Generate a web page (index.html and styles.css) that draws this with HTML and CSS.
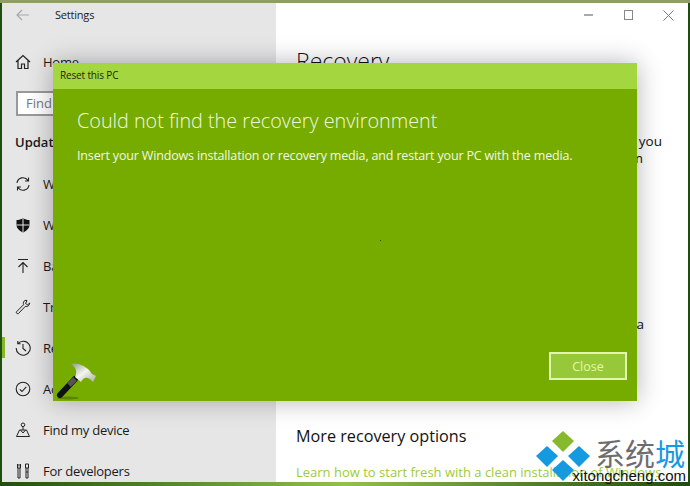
FILE: index.html
```html
<!DOCTYPE html>
<html lang="en">
<head>
  <meta charset="UTF-8">
  <meta name="viewport" content="width=device-width, initial-scale=1.0">
  <title>Settings</title>
  <link rel="stylesheet" href="styles.css">
</head>
<body>
  <div class="window">
    <aside class="sidebar">
      <div class="app-title">
        <svg class="back" width="14" height="12" viewBox="0 0 14 12"><path d="M6 1 1 6l5 5M1 6h12" fill="none" stroke="#a8a8a8" stroke-width="1.2"/></svg>
        <span>Settings</span>
      </div>
      <div class="nav-item home">
        <svg width="16" height="16" viewBox="0 0 16 16"><path d="M1 8 8 1.500 15 8M3 6.500V14.500H6.500V10H9.500V14.500H13V6.500" fill="none" stroke="#222" stroke-width="1.200"/></svg>
        <span>Home</span>
      </div>
      <div class="search">Find a setting</div>
      <h3 class="section">Update &amp; Security</h3>

      <div class="nav-item">
        <svg width="16" height="16" viewBox="0 0 16 16"><path d="M2 7A6 6 0 0 1 13 4.500M14 9A6 6 0 0 1 3 11.500M13.500 1.500V5H10M2.500 14.500V11H6" fill="none" stroke="#222" stroke-width="1.100"/></svg>
        <span>Windows Update</span>
      </div>
      <div class="nav-item">
        <svg width="16" height="16" viewBox="0 0 16 16"><path d="M8 1C6 2.500 4 3 1.500 3V8C1.500 11.500 5 14 8 15.500 11 14 14.500 11.500 14.500 8V3C12 3 10 2.500 8 1Z" fill="#111"/><path d="M8 1V15.500M1.500 8H14.500" stroke="#e6e6e6" stroke-width="1"/></svg>
        <span>Windows Security</span>
      </div>
      <div class="nav-item">
        <svg width="16" height="16" viewBox="0 0 16 16"><path d="M3 1.500H13M8 15V4.500M3.500 9 8 4.500 12.500 9" fill="none" stroke="#222" stroke-width="1.100"/></svg>
        <span>Backup</span>
      </div>
      <div class="nav-item">
        <svg width="16" height="16" viewBox="0 0 16 16"><path d="M10 1.500C8.500 2 8 4 8.600 5.700L1.500 12.800C1 13.500 1.500 15 3.300 14.700L10.300 7.400C12.500 8 14.500 6.500 14.700 4L12.700 5.800 10.500 4.500 12 1.500C11.300 1.300 10.600 1.300 10 1.500Z" fill="none" stroke="#222" stroke-width="1"/></svg>
        <span>Troubleshoot</span>
      </div>
      <div class="nav-item active">
        <svg width="16" height="16" viewBox="0 0 16 16"><path d="M3 3.500A7 7 0 1 1 1.200 8M2.800 1V3.800H5.600M8 4V8.500L11 11" fill="none" stroke="#222" stroke-width="1.100"/></svg>
        <span>Recovery</span>
      </div>
      <div class="nav-item">
        <svg width="16" height="16" viewBox="0 0 16 16"><circle cx="8" cy="8" r="6.800" fill="none" stroke="#222" stroke-width="1.100"/><path d="M4.800 8.300 7 10.500 11.300 5.800" fill="none" stroke="#222" stroke-width="1.100"/></svg>
        <span>Activation</span>
      </div>
      <div class="nav-item">
        <svg width="16" height="16" viewBox="0 0 16 16"><circle cx="8" cy="2.800" r="1.800" fill="none" stroke="#222"/><path d="M8 4.600V8M4.500 8H11.500L14.500 14.500H1.500ZM5.500 8 8 11 10.500 8" fill="none" stroke="#222" stroke-width="1"/></svg>
        <span>Find my device</span>
      </div>
      <div class="nav-item">
        <svg width="16" height="16" viewBox="0 0 16 16"><path d="M4 1V3.500M2.500 1V5H5.500V1M3 5V15H5V5M10.500 1H13.500V5H10.500ZM11 5V15H13V5M11 9H13" fill="none" stroke="#222" stroke-width="1"/></svg>
        <span>For developers</span>
      </div>
    </aside>

    <main class="content">
      <div class="controls">
        <span class="ctl-min"></span>
        <span class="ctl-max"></span>
        <svg width="11" height="11" viewBox="0 0 11 11"><path d="M.5.500 10.500 10.500M10.500.500 .5 10.500" stroke="#777" stroke-width="1"/></svg>
      </div>
      <h1 class="page-title">Recovery</h1>
      <p class="line line-you">resetting it might help. This lets you</p>
      <p class="line line-n">and then reinstalls Windows from</p>
      <p class="line line-a">restore Windows from a</p>
      <h2 class="more">More recovery options</h2>
      <a class="learn" href="#">Learn how to start fresh with a clean installation of Windows</a>
    </main>
  </div>

  <div class="dialog">
    <div class="dialog-title">Reset this PC</div>
    <div class="dialog-body">
      <h2>Could not find the recovery environment</h2>
      <p>Insert your Windows installation or recovery media, and restart your PC with the media.</p>
      <div class="dialog-actions">
        <button type="button">Close</button>
      </div>
    </div>
  </div>
  <span class="speck"></span>

  <!-- hammer badge -->
  <svg class="hammer" width="44" height="42" viewBox="0 0 44 42">
    <defs>
      <linearGradient id="steel" x1="0" y1="0" x2="1" y2="1">
        <stop offset="0" stop-color="#8a9a80"/>
        <stop offset=".5" stop-color="#f4f6f0"/>
        <stop offset="1" stop-color="#a5aca0"/>
      </linearGradient>
    </defs>
    <ellipse cx="14" cy="36" rx="11" ry="1.500" fill="#4d7300" opacity=".7"/>
    <path d="M6 33 21 17" stroke="#111" stroke-width="6" stroke-linecap="round"/>
    <path d="M15 23 21 17" stroke="#555" stroke-width="5"/>
    <path d="M17 2C23 0 31 4 35 8L38 12 42 14 39 20 36 17C32 15 30 15 27 20L21 15C23 11 23 6 17 2Z" fill="url(#steel)"/>
  </svg>

  <!-- site watermark -->
  <div class="watermark">
    <svg width="50" height="50" viewBox="0 0 50 50">
      <path d="M25 0 36 10 25 21 14 10Z" fill="#86b92c"/>
      <path d="M9 15 20 25 9 36-2 25Z" fill="#159ae0"/>
      <path d="M41 15 52 25 41 36 30 25Z" fill="#159ae0"/>
      <path d="M25 29 36 39 25 50 14 39Z" fill="#159ae0"/>
    </svg>
    <div class="wm-name">系统<b>城</b></div>
    <div class="wm-url">xitongcheng.com</div>
  </div>
</body>
</html>
```

FILE: styles.css
```css
* {
  box-sizing: border-box;
}

html, body {
  height: 100%;
}

body {
  margin: 0;
  overflow: hidden;
  font-family: "Open Sans", "Noto Sans", sans-serif;
  background:
    linear-gradient(#8f9e66 0 3px, transparent 3px),
    linear-gradient(90deg, #1f4f0e 0%, #8ec24a 50%, #1f4a12 100%);
  padding: 3px 2px 4px 2px;
}

.window {
  display: flex;
  height: 100%;
  overflow: hidden;
  background: white;
}

.sidebar {
  width: 274px;
  flex: none;
  background-color: #e6e6e6;
  color: #1a1a1a;
}

.app-title {
  height: 38px;
  padding: 4px 0 0 14px;
  display: flex;
  align-items: flex-start;
  font-size: 11px;
  letter-spacing: -0.2px;
}

.app-title .back {
  margin-top: 2px;
  margin-right: 25px;
}

.nav-item {
  height: 41px;
  display: flex;
  align-items: center;
  padding-left: 13px;
  gap: 12px;
  font-size: 13px;
  letter-spacing: -0.25px;
}

.nav-item.active {
  position: relative;
}

.nav-item.active::before {
  content: "";
  position: absolute;
  left: 0;
  top: 10px;
  width: 3px;
  height: 21px;
  background-color: #86b72b;
}

.search {
  margin: 9px 16px 0 14px;
  height: 25px;
  border: 2px solid #999;
  background-color: white;
  color: #777;
  font-size: 13px;
  line-height: 21px;
  padding-left: 8px;
}

.section {
  margin: 14px 0 9px 13px;
  height: 24px;
  line-height: 24px;
  font-size: 13px;
  font-weight: 600;
}

.content {
  flex: 1;
  padding-left: 20px;
  color: #111;
}

.controls {
  height: 24px;
  display: flex;
  align-items: center;
  justify-content: flex-end;
  gap: 30px;
  padding-right: 14px;
}

.ctl-min {
  width: 9px;
  height: 2px;
  margin-right: 1px;
  background-color: #aaa;
}

.ctl-max {
  width: 9px;
  height: 10px;
  border: 1px solid #888;
}

.page-title {
  margin: 18px 0 0;
  font-size: 23px;
  font-weight: 300;
  line-height: 32px;
}

.line {
  margin: 0;
  text-align: right;
  white-space: nowrap;
  font-size: 13.500px;
  line-height: 17px;
}

.line-you {
  margin-top: 56px;
  width: 366px;
}

.line-n {
  width: 347px;
}

.line-a {
  margin-top: 149px;
  width: 348px;
}

.more {
  margin: 91px 0 0;
  font-size: 16.200px;
  font-weight: 400;
  line-height: 24px;
}

.learn {
  display: block;
  margin-top: 15px;
  font-size: 13px;
  line-height: 18px;
  color: #9ccc3c;
  text-decoration: none;
  white-space: nowrap;
}

.dialog {
  position: absolute;
  left: 53px;
  top: 63px;
  width: 584px;
  height: 338px;
  display: flex;
  flex-direction: column;
  background-color: #76ab00;
  box-shadow: 0 0 24px rgba(0, 0, 0, 0.3);
}

.dialog-title {
  height: 26px;
  padding-left: 7px;
  background-color: #a4d63f;
  color: #1a2a00;
  font-size: 10px;
  letter-spacing: -0.15px;
  line-height: 24px;
}

.dialog-body {
  flex: 1;
  display: flex;
  flex-direction: column;
  padding: 18px 10px 21px 24px;
  color: #f2f8e0;
}

.dialog-body h2 {
  margin: 0;
  font-size: 19.800px;
  font-weight: 300;
  line-height: 28px;
}

.dialog-body p {
  margin: 12px 0 0;
  font-size: 12.500px;
  letter-spacing: -0.16px;
  line-height: 18px;
}

.dialog-actions {
  margin-top: auto;
  text-align: right;
}

.dialog-actions button {
  width: 78px;
  height: 28px;
  padding: 0;
  font-family: inherit;
  font-size: 12.500px;
  background-color: #97c83a;
  color: #e4f6b0;
  border: 2px solid #e3f6b0;
}

.speck {
  position: absolute;
  left: 380px;
  top: 240px;
  width: 1px;
  height: 1px;
  background-color: #2d4a00;
}

.hammer {
  position: absolute;
  left: 54px;
  top: 362px;
}

.watermark {
  position: absolute;
  left: 538px;
  top: 431px;
  width: 150px;
  height: 52px;
}

.watermark svg {
  position: absolute;
  left: 0;
  top: 0;
  overflow: visible;
}

.wm-name {
  position: absolute;
  left: 57px;
  top: 3px;
  font-family: "Noto Sans CJK SC", sans-serif;
  font-size: 30px;
  line-height: 36px;
  color: #6d6d6d;
  white-space: nowrap;
}

.wm-name b {
  font-weight: 400;
  color: #159ae0;
}

.wm-url {
  position: absolute;
  right: 2px;
  top: 37px;
  font-family: "Liberation Sans", sans-serif;
  font-size: 15px;
  line-height: 16px;
  color: #111;
}
```
